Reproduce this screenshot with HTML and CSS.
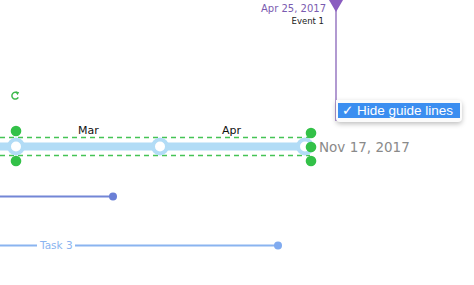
FILE: index.html
```html
<!DOCTYPE html>
<html>
<head>
<meta charset="utf-8">
<link rel="stylesheet" href="styles.css">
</head>
<body>
<div class="canvas">
  <svg class="shapes" width="474" height="285" viewBox="0 0 474 285">
    <!-- event marker -->
    <line x1="336" y1="4" x2="336" y2="121" stroke="#7e57b3" stroke-width="1.2"/>
    <path d="M329 0 L343 0 L336 12 Z" fill="#8a5cc0"/>
    <!-- rotate icon -->
    <path d="M17.6 93.2 A3.4 3.4 0 1 0 18.3 97.3" fill="none" stroke="#3fb94e" stroke-width="1.5"/>
    <path d="M15.6 91.2 L19.2 92.2 L17.4 95.2 Z" fill="#3fb94e"/>
    <!-- guide lines -->
    <line x1="0" y1="137.5" x2="310" y2="137.5" stroke="#45c455" stroke-width="1.4" stroke-dasharray="5 4"/>
    <line x1="0" y1="155.5" x2="310" y2="155.5" stroke="#45c455" stroke-width="1.4" stroke-dasharray="5 4"/>
    <!-- main bar -->
    <line x1="0" y1="146.5" x2="305" y2="146.5" stroke="#b2dcf6" stroke-width="8"/>
    <circle cx="16" cy="146.5" r="7" fill="#fff" stroke="#b2dcf6" stroke-width="4"/>
    <circle cx="160" cy="146.5" r="7" fill="#fff" stroke="#b2dcf6" stroke-width="4"/>
    <circle cx="305" cy="146.5" r="7" fill="#fff" stroke="#b2dcf6" stroke-width="4"/>
    <!-- handles -->
    <circle cx="16" cy="131" r="5.3" fill="#33c148"/>
    <circle cx="16" cy="161" r="5.3" fill="#33c148"/>
    <circle cx="311" cy="133" r="5.3" fill="#33c148"/>
    <circle cx="311" cy="147" r="5.3" fill="#33c148"/>
    <circle cx="311" cy="161" r="5.3" fill="#33c148"/>
    <!-- task lines -->
    <line x1="0" y1="196.5" x2="113" y2="196.5" stroke="#7386d6" stroke-width="2"/>
    <circle cx="113" cy="196.5" r="4" fill="#6a7fd6"/>
    <line x1="0" y1="245.5" x2="37" y2="245.5" stroke="#8ab4f0" stroke-width="2"/>
    <line x1="75" y1="245.5" x2="278" y2="245.5" stroke="#8ab4f0" stroke-width="2"/>
    <circle cx="278" cy="245.5" r="4" fill="#80abf0"/>
  </svg>

  <div class="event">
    <div class="event-date">Apr 25, 2017</div>
    <div class="event-name">Event 1</div>
  </div>

  <div class="month m-mar">Mar</div>
  <div class="month m-apr">Apr</div>
  <div class="end-date">Nov 17, 2017</div>
  <div class="task-label">Task 3</div>

  <div class="menu">
    <div class="menu-item">✓ Hide guide lines</div>
  </div>
</div>
</body>
</html>
```
FILE: styles.css
```css
html, body {
  margin: 0;
  padding: 0;
  background: #ffffff;
}
body {
  font-family: "DejaVu Sans", "Liberation Sans", sans-serif;
}
.canvas {
  position: relative;
  width: 474px;
  height: 285px;
  overflow: hidden;
}
.shapes {
  position: absolute;
  left: 0;
  top: 0;
}
.event {
  position: absolute;
  right: 148px;
  top: 3px;
  text-align: right;
}
.event-date {
  font-size: 10px;
  color: #7a5bb0;
  line-height: 12px;
}
.event-name {
  font-size: 8.5px;
  color: #222;
  line-height: 12px;
  margin-right: 2px;
}
.month {
  position: absolute;
  top: 124px;
  font-size: 11px;
  color: #111;
  line-height: 13px;
}
.m-mar { left: 78px; }
.m-apr { left: 222px; }
.end-date {
  position: absolute;
  left: 319px;
  top: 139px;
  font-size: 13.5px;
  color: #8a8a8a;
  line-height: 16px;
}
.task-label {
  position: absolute;
  left: 40px;
  top: 239px;
  font-size: 10.5px;
  color: #8ab4f0;
  line-height: 13px;
}
.menu {
  position: absolute;
  left: 336px;
  top: 100px;
  width: 126px;
  padding: 3px 0 4px;
  background: #fbfbfb;
  border-radius: 0 4px 4px 4px;
  box-shadow: 0 2px 5px rgba(0,0,0,0.25);
}
.menu-item {
  margin: 0 2px;
  background: #3b8ef0;
  color: #fff;
  font-family: "Liberation Sans", "DejaVu Sans", sans-serif;
  font-size: 13.5px;
  line-height: 15px;
  padding: 0 0 0 4px;
  white-space: nowrap;
}
```
